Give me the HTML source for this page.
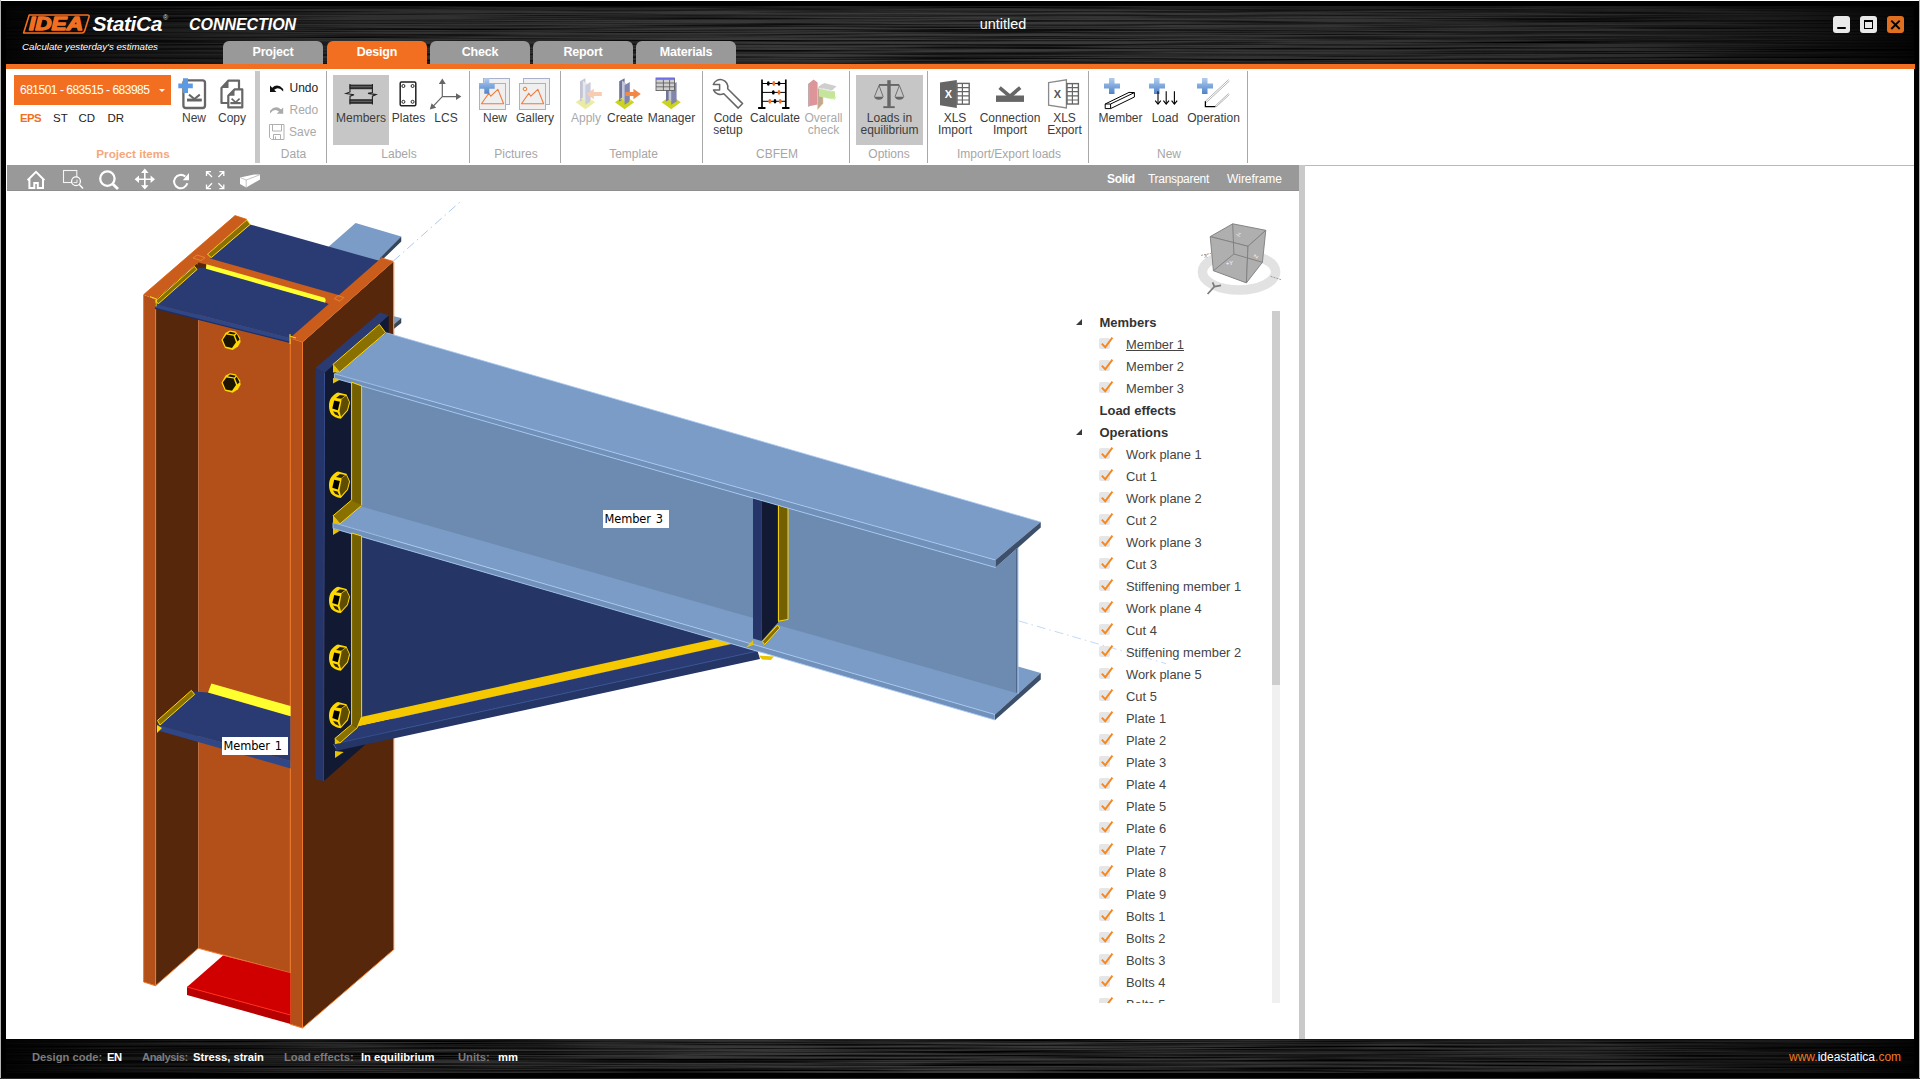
<!DOCTYPE html>
<html lang="en">
<head>
<meta charset="utf-8">
<title>IDEA StatiCa Connection - untitled</title>
<style>
*{box-sizing:border-box;margin:0;padding:0}
html,body{width:1920px;height:1079px;overflow:hidden;background:#000;font-family:"Liberation Sans",sans-serif}
.abs{position:absolute}
#win{position:absolute;left:0;top:0;width:1920px;height:1079px;background:#000;overflow:hidden}
#edgeT{left:0;top:0;width:1920px;height:1px;background:#fff}
#edgeL{left:0;top:0;width:1px;height:1079px;background:#b4b4b4}
#edgeR{left:1919px;top:0;width:1px;height:1079px;background:#b4b4b4}
#edgeB{left:0;top:1078px;width:1920px;height:1px;background:#2a2a2a}
.brushed{background-image:linear-gradient(90deg,#050505 0,#181818 6%,#2e2e2e 16%,#393939 45%,#393939 55%,#2e2e2e 84%,#181818 94%,#050505 100%)}
.brushed svg{position:absolute;left:0;top:0}
#hdr{left:6px;top:6px;width:1908px;height:58px}
#stripe{left:6px;top:64px;width:1909px;height:5px;background:#f26f21}
#content{left:6px;top:69px;width:1908px;height:970px;background:#fff}
#status{left:6px;top:1039px;width:1908px;height:34px}
/* logo */
#logo{left:22px;top:14px;width:68px;height:20px}
.ital{font-style:italic;font-weight:bold;color:#fff;white-space:nowrap}
#statica{left:92.5px;top:12px;font-size:21px;line-height:24px;letter-spacing:-.4px}
#reg{left:163px;top:14px;font-size:7px;line-height:8px;color:#ddd;font-style:normal;font-weight:normal}
#conn{left:189px;top:14px;font-size:16px;line-height:22px;font-weight:bold;letter-spacing:-.05px}
#slogan{left:22px;top:40.5px;font-size:9.75px;line-height:12px;font-weight:normal;letter-spacing:-.03px}
#title{left:930px;top:14px;width:146px;text-align:center;color:#fff;font-size:14.4px;line-height:20px}
.wb{top:16px;width:17px;height:17px;border-radius:3px;background:#e9e9e9}
/* tabs */
.tab{top:41px;width:100px;height:23px;border-radius:6px 6px 0 0;background:#999;color:#fff;font-weight:bold;font-size:12.5px;line-height:23px;text-align:center;letter-spacing:-.2px}
.tab.on{background:#f26f21;height:25px}
/* ribbon */
.sep{top:71px;width:1px;height:92px;background:#a8a8a8}
.lbl{font-size:12px;line-height:12px;color:#3c3c3c;text-align:center;white-space:nowrap;transform:translateX(-50%)}
.lbl.dis{color:#a9a9a9}
.grp{top:147.5px;font-size:12px;line-height:12px;color:#a6a6a6;text-align:center;white-space:nowrap;transform:translateX(-50%)}
.hl{top:75px;height:70px;background:#c6c6c6}
/* toolbar */
#tbar{left:7px;top:165px;width:1292px;height:26px;background:#999}
.vm{top:172px;font-size:12px;line-height:14px;color:#fff;white-space:nowrap}
/* panels */
#split{left:1299px;top:165px;width:6px;height:874px;background:#c9c9c9}
#rpanel{left:1305px;top:165px;width:609px;height:874px;border-top:1px solid #b9b9b9;background:#fff}
#vtop{left:7px;top:190px;width:1292px;height:1px;background:#8f8f8f}
/* status */
.st{top:1050px;font-size:11.2px;line-height:14px;white-space:nowrap;font-weight:bold}
.st.k{color:#7c7c7c}
.st.v{color:#fff}
/* tree */
.th{left:1099px;font-size:13px;line-height:14px;font-weight:bold;color:#333;white-space:nowrap}
.ti{left:1126px;font-size:12.9px;line-height:14px;color:#444;white-space:nowrap}
.cb{left:1099px;width:11px;height:11px;border-radius:2px;background:#e6e6e6}
.mlabel{background:#fff;color:#000;font-family:"DejaVu Sans","Liberation Sans",sans-serif;font-size:11.4px;line-height:18px;white-space:nowrap;padding-left:1.5px;letter-spacing:-.1px;word-spacing:1.5px}
</style>
</head>
<body>
<div id="win">
<div id="edgeT" class="abs"></div><div id="edgeL" class="abs"></div><div id="edgeR" class="abs"></div><div id="edgeB" class="abs"></div>
<div id="hdr" class="abs brushed"><svg width="1908" height="58"><filter id="br1" x="0" y="0" width="100%" height="100%"><feTurbulence type="fractalNoise" baseFrequency="0.0035 0.55" numOctaves="3" seed="7"/><feColorMatrix type="matrix" values="0 0 0 0 0  0 0 0 0 0  0 0 0 0 0  2.2 0 0 0 -0.85"/></filter><rect width="1908" height="58" filter="url(#br1)"/><rect width="1908" height="58" fill="url(#hfade)"/><defs><linearGradient id="hfade" x1="0" y1="0" x2="0" y2="1"><stop offset="0" stop-color="#000" stop-opacity=".4"/><stop offset=".1" stop-color="#000" stop-opacity="0"/><stop offset=".85" stop-color="#000" stop-opacity="0"/><stop offset="1" stop-color="#000" stop-opacity=".2"/></linearGradient></defs></svg></div>
<div id="status" class="abs brushed"><svg width="1908" height="34"><filter id="br2" x="0" y="0" width="100%" height="100%"><feTurbulence type="fractalNoise" baseFrequency="0.0035 0.55" numOctaves="3" seed="11"/><feColorMatrix type="matrix" values="0 0 0 0 0  0 0 0 0 0  0 0 0 0 0  2.2 0 0 0 -0.7"/></filter><rect width="1908" height="34" filter="url(#br2)"/></svg></div>
<div id="content" class="abs"></div>

<!--TABS-->
<div class="abs tab" style="left:223px">Project</div>
<div class="abs tab on" style="left:327px">Design</div>
<div class="abs tab" style="left:430px">Check</div>
<div class="abs tab" style="left:533px">Report</div>
<div class="abs tab" style="left:636px">Materials</div>
<div id="stripe" class="abs"></div>

<!--LOGO-->
<svg class="abs" id="logo" viewBox="0 0 68 20" width="68" height="20">
 <path d="M7.2 1 H65.5 Q67.6 1 67 3 L62.6 17 Q62 19 59.8 19 H1.6 Z" fill="none" stroke="#f26f21" stroke-width="1.6" stroke-linejoin="round"/>
 <text x="7" y="16.4" font-family="Liberation Sans, sans-serif" font-size="17.5" font-weight="bold" font-style="italic" fill="#f26f21" stroke="#f26f21" stroke-width="1.3" stroke-linejoin="round" textLength="54" lengthAdjust="spacingAndGlyphs">IDEA</text>
</svg>
<div id="statica" class="abs ital">StatiCa</div>
<div id="reg" class="abs ital">®</div>
<div id="conn" class="abs ital">CONNECTION</div>
<div id="slogan" class="abs ital">Calculate yesterday's estimates</div>
<!--TITLE-->
<div id="title" class="abs">untitled</div>
<div class="abs wb" style="left:1833px"><div class="abs" style="left:4px;top:11px;width:9px;height:2px;background:#000;border-radius:1px"></div></div>
<div class="abs wb" style="left:1860px"><div class="abs" style="left:4px;top:4px;width:9px;height:9px;border:1.5px solid #000;border-top-width:2px"></div></div>
<div class="abs wb" style="left:1887px;background:#e06f1f"><svg class="abs" style="left:0;top:0" width="17" height="17" viewBox="0 0 17 17"><path d="M4.3 4.6 L12.7 13 M12.7 4.6 L4.3 13" stroke="#000" stroke-width="1.9" fill="none"/></svg></div>
<!--RIBBON-->
<div class="abs" style="left:14px;top:75px;width:157px;height:30px;background:#f26f21"></div>
<div class="abs" style="left:20px;top:83px;font-size:12px;line-height:14px;color:#fff;white-space:nowrap;letter-spacing:-.5px">681501 - 683515 - 683985</div>
<div class="abs" style="left:159px;top:89px;width:0;height:0;border-left:3px solid transparent;border-right:3px solid transparent;border-top:3.5px solid #fff"></div>
<div class="abs" style="left:20px;top:111px;font-size:11.4px;line-height:14px;color:#f26f21;white-space:nowrap;font-weight:bold;letter-spacing:-.6px">EPS</div>
<div class="abs" style="left:53px;top:111px;font-size:11.5px;line-height:14px;color:#222;white-space:nowrap">ST</div>
<div class="abs" style="left:78.5px;top:111px;font-size:11.5px;line-height:14px;color:#222;white-space:nowrap">CD</div>
<div class="abs" style="left:107.5px;top:111px;font-size:11.5px;line-height:14px;color:#222;white-space:nowrap">DR</div>
<div class="abs" style="left:255px;top:71px;width:5px;height:92px;background:#c8c8c8"></div>
<div class="abs sep" style="left:326px"></div><div class="abs sep" style="left:469px"></div><div class="abs sep" style="left:560px"></div>
<div class="abs sep" style="left:702px"></div><div class="abs sep" style="left:849px"></div><div class="abs sep" style="left:927px"></div>
<div class="abs sep" style="left:1088px"></div><div class="abs sep" style="left:1247px"></div>
<div class="abs hl" style="left:333px;width:56px"></div>
<div class="abs hl" style="left:856px;width:67px"></div>

<div class="abs lbl" style="left:194px;top:112px">New</div>
<div class="abs lbl" style="left:232px;top:112px">Copy</div>
<div class="abs lbl" style="left:289.5px;top:82px;color:#222;transform:none">Undo</div>
<div class="abs lbl dis" style="left:289.5px;top:104px;transform:none">Redo</div>
<div class="abs lbl dis" style="left:289px;top:126px;transform:none">Save</div>
<div class="abs lbl" style="left:361px;top:112px">Members</div>
<div class="abs lbl" style="left:408.5px;top:112px">Plates</div>
<div class="abs lbl" style="left:446px;top:112px">LCS</div>
<div class="abs lbl" style="left:495px;top:112px">New</div>
<div class="abs lbl" style="left:535px;top:112px">Gallery</div>
<div class="abs lbl dis" style="left:586px;top:112px">Apply</div>
<div class="abs lbl" style="left:625px;top:112px">Create</div>
<div class="abs lbl" style="left:671.5px;top:112px">Manager</div>
<div class="abs lbl" style="left:728px;top:112px">Code<br>setup</div>
<div class="abs lbl" style="left:775px;top:112px">Calculate</div>
<div class="abs lbl dis" style="left:823.5px;top:112px">Overall<br>check</div>
<div class="abs lbl" style="left:889.5px;top:112px">Loads in<br>equilibrium</div>
<div class="abs lbl" style="left:955px;top:112px">XLS<br>Import</div>
<div class="abs lbl" style="left:1010px;top:112px">Connection<br>Import</div>
<div class="abs lbl" style="left:1064.5px;top:112px">XLS<br>Export</div>
<div class="abs lbl" style="left:1120.5px;top:112px">Member</div>
<div class="abs lbl" style="left:1165px;top:112px">Load</div>
<div class="abs lbl" style="left:1213.5px;top:112px">Operation</div>

<div class="abs grp" style="left:133px;color:#f5a77b;font-weight:bold;font-size:11.7px">Project items</div>
<div class="abs grp" style="left:293.5px">Data</div>
<div class="abs grp" style="left:399px">Labels</div>
<div class="abs grp" style="left:516px">Pictures</div>
<div class="abs grp" style="left:633.5px">Template</div>
<div class="abs grp" style="left:777px">CBFEM</div>
<div class="abs grp" style="left:889px">Options</div>
<div class="abs grp" style="left:1009px">Import/Export loads</div>
<div class="abs grp" style="left:1169px">New</div>
<!--ICONS-->
<svg class="abs" style="left:0;top:0" width="1920" height="170" viewBox="0 0 1920 170">
<defs>
 <linearGradient id="gplus" x1="0" y1="0" x2="0" y2="1"><stop offset="0" stop-color="#b4cdec"/><stop offset=".5" stop-color="#7fa8de"/><stop offset="1" stop-color="#4f82c6"/></linearGradient>
 <g id="plus"><path d="M5 0 h5.5 v5.5 h5.5 v5 h-5.5 v5.5 h-5.5 v-5.5 h-5 v-5 h5 z" fill="url(#gplus)"/></g>
</defs>
<!-- Project: New -->
<g fill="none" stroke="#666" stroke-width="2.3">
 <rect x="183.4" y="80.4" width="21.6" height="27.6" rx="2.5"/>
</g>
<rect x="187" y="98.6" width="14.8" height="2.9" fill="#666"/>
<path d="M189 94.6 L194.4 99 L199.8 94.6" fill="none" stroke="#666" stroke-width="2"/>
<path d="M183 78.2 h5 v5.3 h4.8 v4.8 h-4.8 v4.6 h-5 v-4.6 h-4.7 v-4.8 h4.7 z" fill="#5b9be6"/>
<!-- Project: Copy -->
<g fill="#fff" stroke="#666" stroke-width="2.2" stroke-linejoin="round">
 <path d="M228.5 80.6 H239 V103 H221.5 V88 Z"/>
 <path d="M234.5 89.4 H242.3 V107.4 H228.3 V95.8 Z"/>
</g>
<path d="M228.5 80.6 V88 H221.5 Z" fill="#666"/><path d="M234.5 89.4 V95.8 H228.3 Z" fill="#666"/>
<rect x="230.4" y="102" width="10.4" height="2.2" fill="#666"/>
<path d="M231.6 98.6 L235.6 102.4 L239.6 98.6" fill="none" stroke="#666" stroke-width="1.6"/>
<!-- Undo / Redo / Save -->
<path d="M270 92 V85.6 L272.2 87.8 Q277.5 82.8 283.2 89 L283.2 91.6 Q278.5 85.8 274.2 89.8 L276.4 92 Z" fill="#111"/>
<path d="M283.2 113.8 V107.4 L281 109.6 Q275.7 104.6 270 110.8 L270 113.4 Q274.7 107.6 279 111.6 L276.8 113.8 Z" fill="#aaa"/>
<g fill="none" stroke="#b0b0b0" stroke-width="1">
 <path d="M269.5 124.5 H284 V139.5 H271.5 L269.5 137.5 Z"/><path d="M272.5 124.5 V131 H281.5 V124.5"/><path d="M273.5 139.5 V134.5 H280.5 V139.5 M275.5 139 V136.5"/>
</g>
<!-- Members -->
<g>
 <rect x="349.5" y="84.6" width="23.4" height="4.6" fill="#2b2b2b"/><rect x="350" y="86.2" width="22.4" height="1.1" fill="#666"/>
 <rect x="349.5" y="99.2" width="23.4" height="4.6" fill="#2b2b2b"/><rect x="350" y="100.8" width="22.4" height="1.1" fill="#666"/>
 <path d="M350 84 V92 L346 93.6 L354 94.8 L350 96.2 V104.6 M372.4 84 V92.6 L368 93.4 L376 94.6 L372.4 96.2 V104.6" fill="none" stroke="#222" stroke-width="1.1"/>
</g>
<!-- Plates -->
<rect x="400.2" y="82" width="15.6" height="23.8" rx="1.2" fill="none" stroke="#222" stroke-width="1.5"/>
<g fill="none" stroke="#222" stroke-width="1"><circle cx="403.4" cy="86" r="1.5"/><circle cx="412.6" cy="86" r="1.5"/><circle cx="403.4" cy="101.8" r="1.5"/><circle cx="412.6" cy="101.8" r="1.5"/></g>
<!-- LCS -->
<g stroke="#666" stroke-width="1.2" fill="#666">
 <path d="M442.3 96.6 V83 M442.3 96.6 H456 M442.3 96.6 L433.5 105.8" fill="none"/>
 <path d="M442.3 78.6 L445.8 84 H438.8 Z M461.4 96.6 L456 100 V93.2 Z M429.8 109.6 L431.6 103.2 L436.2 107.8 Z" stroke="none"/>
</g>
<!-- Pictures New / Gallery -->
<g id="pic">
 <rect x="483.5" y="78.5" width="26" height="26" fill="#f0f0f0" stroke="#a9b1cc" stroke-width="1"/>
 <rect x="479.5" y="83.5" width="26" height="26" fill="#efefef" stroke="#a9b1cc" stroke-width="1"/>
 <path d="M481.5 103.7 L488.8 93.2 L490.8 96.2 L497.9 89.4 L503.6 103.7 Z" fill="none" stroke="#f07a3a" stroke-width="1.1" stroke-linejoin="round"/>
</g>
<use href="#pic" x="40" y="0"/>
<circle cx="525" cy="89" r="1.8" fill="none" stroke="#f07a3a" stroke-width="1"/>
<path d="M484.3 78.2 h5 v5.6 h5.4 v4.9 h-5.4 v5 h-5 v-5 h-5.1 v-4.9 h5.1 z" fill="url(#gplus)"/>
<!-- Template: Apply (faded), Create, Manager -->
<g id="col" >
 <path d="M615 102.2 L624.6 95.4 L634.2 102.2 L624.6 109.2 Z" fill="#cbd322"/>
 <path d="M619.2 81.2 L624.6 78.2 V98.6 L619.2 101.6 Z" fill="#6f7499"/>
 <path d="M622 80.6 L627.4 84.4 V103 L622 99.6 Z" fill="#c3c7da"/>
 <path d="M624.6 85.2 L629.8 82 V101.4 L624.6 104.8 Z" fill="#8286ad"/>
 <path d="M619.4 99.6 l2.4-1.8 l2 1.6 z M629.6 99.4 l2.2 1.4 l-2.2 1.6z" fill="#e4ea3a"/>
</g>
<path d="M625.4 92 H633.4 V88.8 L640.8 94 L633.4 99.2 V96 H625.4 Z" fill="#f08848"/>
<g opacity=".42"><use href="#col" x="-39.2" y="0"/><path d="M601.8 92 H593.8 V88.8 L586.4 94 L593.8 99.2 V96 H601.8 Z" fill="#f08848"/></g>
<g>
 <path d="M661.6 102.2 L671.2 95.4 L680.8 102.2 L671.2 109.2 Z" fill="#cbd322"/>
 <path d="M666 84 L671.2 81 V98.6 L666 101.6 Z" fill="#6f7499"/>
 <path d="M668.6 84 L674 86 V103 L668.6 99.6 Z" fill="#c3c7da"/>
 <path d="M671.2 85.2 L676.6 82 V101.4 L671.2 104.8 Z" fill="#8286ad"/>
 <rect x="656" y="78" width="18.6" height="12.6" fill="#cfcfcf" stroke="#555" stroke-width=".8"/>
 <rect x="656" y="78" width="18.6" height="1.8" fill="#6e6ee8"/>
 <path d="M656 83 H674.6 M656 86.8 H674.6 M663.4 79.8 V90.6 M669.6 79.8 V90.6" stroke="#555" stroke-width=".8" fill="none"/>
</g>
<!-- Code setup wrench -->
<path d="M713.3 84.6 A7.5 7.5 0 0 1 727.7 88.7 L742.6 103.6 L738.2 108.1 L723.8 93.7 A7.5 7.5 0 0 1 713.5 89.9 H719.6 V84.6 Z" fill="#fff" stroke="#666" stroke-width="1.5" stroke-linejoin="round"/>
<!-- Calculate abacus -->
<g stroke="#000" fill="none">
 <path d="M762 79.4 V107.6 M785.8 79.4 V107.6" stroke-width="1.7"/>
 <path d="M758.8 108 H764.8 M782.8 108 H788.8" stroke-width="1.8" stroke-linecap="round"/>
 <path d="M762 83.5 H785.8 M762 92.4 H785.8 M762 101.3 H785.8" stroke-width="1"/>
</g>
<g fill="#000"><ellipse cx="768.3" cy="83.5" rx="1.4" ry="2.2"/><ellipse cx="779" cy="83.5" rx="1.4" ry="2.2"/><ellipse cx="773.3" cy="92.4" rx="1.4" ry="2.2"/><ellipse cx="775" cy="101.3" rx="1.4" ry="2.2"/></g>
<g fill="#f26f21"><ellipse cx="773.8" cy="83.5" rx="1.4" ry="2.4"/><ellipse cx="779" cy="92.4" rx="1.4" ry="2.4"/><ellipse cx="769.8" cy="101.3" rx="1.4" ry="2.4"/><ellipse cx="780.2" cy="101.3" rx="1.4" ry="2.4"/></g>
<!-- Overall check (faded) -->
<g opacity=".9">
 <path d="M808 84 L813.6 79.4 L817.6 82.6 V104.6 L808 106.4 Z" fill="#da8a90"/>
 <path d="M808 84 L810 83.4 V106 L808 106.4 Z" fill="#b9a2a6"/>
 <path d="M817.6 88 L823 84 V103.4 L817.6 109.4 Z" fill="#b99f8a" stroke="#f4c078" stroke-width=".6"/>
 <path d="M819 88.6 L835 91.4 V99.6 L819 96.6 Z" fill="#bfe392"/>
 <path d="M819 96.6 L835 99.6 L836.6 96 L831 99.2 Z" fill="#c9f09a"/>
 <path d="M817.8 87.2 L824.4 83 L836.6 86.2 L832 90.6 Z" fill="#c9c9c9"/>
 <path d="M817.8 87.2 L832 90.6 V91.8 L817.8 88.6Z" fill="#e4e4e4"/>
</g>
<!-- Loads in equilibrium -->
<g fill="#666">
 <rect x="887.3" y="80.2" width="3.4" height="26.6"/><rect x="883.3" y="106.2" width="11.4" height="1.9"/><rect x="879" y="84" width="20.2" height="1.9"/>
 <path d="M874.2 96.8 H883.4 Q882.6 99.8 878.8 99.8 Q875 99.8 874.2 96.8 Z M894.8 96.8 H904 Q903.2 99.8 899.4 99.8 Q895.6 99.8 894.8 96.8 Z"/>
</g>
<path d="M874.4 96.8 L879 85.4 L883.2 96.8 M895 96.8 L899.4 85.4 L903.8 96.8" fill="none" stroke="#666" stroke-width=".9"/>
<!-- XLS Import -->
<path d="M940 82.4 L956.8 80 V108 L940 105.3 Z" fill="#666"/>
<text x="948.4" y="98" font-family="Liberation Sans, sans-serif" font-weight="bold" font-size="11" fill="#fff" text-anchor="middle">X</text>
<g fill="none" stroke="#666"><rect x="957" y="83.4" width="12.2" height="20.8" stroke-width="1.4"/><path d="M957 87.6 H969 M957 91.7 H969 M957 95.8 H969 M957 100 H969 M962.4 83.4 V104.2" stroke-width="1.2"/></g>
<!-- Connection Import -->
<g fill="#666"><rect x="996" y="95.5" width="28" height="6.4"/></g>
<path d="M999.6 87.6 L1010 96.4 L1020.2 87.6" fill="none" stroke="#666" stroke-width="3.6"/>
<!-- XLS Export -->
<path d="M1048.6 82.6 L1066.4 79.8 V108 L1048.6 105.2 Z" fill="#fff" stroke="#8a8a8a" stroke-width="1.3"/>
<text x="1057.4" y="98" font-family="Liberation Sans, sans-serif" font-weight="bold" font-size="11" fill="#555" text-anchor="middle">X</text>
<g fill="none" stroke="#666"><rect x="1067" y="83.6" width="11.4" height="20.4" stroke-width="1.4"/><path d="M1067 87.6 H1078 M1067 91.7 H1078 M1067 95.8 H1078 M1067 100 H1078 M1072.4 83.6 V104" stroke-width="1.2"/></g>
<!-- New: Member -->
<use href="#plus" x="1104" y="78"/>
<g fill="#fff" stroke="#000" stroke-width="1" stroke-linejoin="round">
 <path d="M1105.2 104 L1129 92.4 L1134.4 92.6 V97 L1110.6 108.6 H1105.2 Z"/>
 <path d="M1105.2 104 H1110.6 V108.6 M1110.6 104 L1134.4 92.6" fill="none"/>
</g>
<!-- New: Load -->
<use href="#plus" x="1149" y="78"/>
<g stroke="#000" stroke-width="1.1" fill="none"><path d="M1158 91.2 V104 M1166.2 91.2 V104 M1174.4 91.2 V104"/><path d="M1155.2 100.6 L1158 104.2 L1160.8 100.6 M1163.4 100.6 L1166.2 104.2 L1169 100.6 M1171.6 100.6 L1174.4 104.2 L1177.2 100.6"/></g>
<!-- New: Operation -->
<use href="#plus" x="1197" y="78"/>
<g fill="none"><path d="M1205.2 101.4 L1228.6 79.6 M1206.4 102.4 L1229.4 81 M1215 106.2 L1228.6 93.4 M1216 107 L1229.4 94.6" stroke="#aaa" stroke-width=".9"/><path d="M1205.4 101.2 V106.6 H1215.4" stroke="#000" stroke-width="1.3"/></g>
</svg>
<!--TOOLBAR-->
<div id="tbar" class="abs"></div>
<svg class="abs" style="left:0;top:165px" width="300" height="26" viewBox="0 165 300 26">
<g fill="none" stroke="#fff">
 <path d="M27.6 180.2 L36 171.8 L44.4 180.2 M29.4 179 V188 H34.3 V183 H37.8 V188 H43 V179" stroke-width="2" stroke-linejoin="miter"/>
 <rect x="63.5" y="170.5" width="13.3" height="12" stroke-width="1.1" opacity=".9"/>
 <circle cx="76" cy="181.3" r="4.4" stroke-width="1.3" fill="#999"/><path d="M79.3 184.6 L83 188.4" stroke-width="1.5"/>
 <path d="M73.6 182.6 H77 V179.6" stroke-width="1" opacity=".85"/>
 <circle cx="107.4" cy="178.6" r="7.2" stroke-width="2.3"/><path d="M112.8 184 L118 189" stroke-width="2.8"/>
 <path d="M144.8 171.5 V187 M137 179.2 H152.6" stroke-width="1.6"/>
 <path d="M185.3 176.6 A6.7 6.7 0 1 0 187.3 183.3" stroke-width="2"/>
 <path d="M206.5 176 V171.6 H211 M207 172 L212 177 M219.4 171.6 H223.8 V176 M223.4 172 L218.4 177 M206.5 184.4 V188.6 H211 M207 188.2 L212 183.2 M219.4 188.6 H223.8 V184.4 M223.4 188.2 L218.4 183.2" stroke-width="1.3"/>
</g>
<g fill="#fff">
 <path d="M144.8 168.6 L148.6 173 H141 Z M144.8 189.6 L148.6 185.2 H141 Z M134.6 179.2 L139 175.4 V183 Z M155 179.2 L150.6 175.4 V183 Z"/>
 <path d="M189 173 V180.2 H182.8 Z"/>
 <path d="M240 177.4 L254.2 174.4 L260 174.6 V179.6 L246.2 187.4 L240 184 Z"/>
</g>
<path d="M240.4 177.6 L246.2 180 V187 M246.2 180 L259.8 174.8" fill="none" stroke="#aaa" stroke-width=".7"/>
</svg>
<div class="abs vm" style="left:1107px;font-weight:bold;letter-spacing:-.3px">Solid</div>
<div class="abs vm" style="left:1148px;letter-spacing:-.3px">Transparent</div>
<div class="abs vm" style="left:1227px;letter-spacing:-.05px">Wireframe</div>
<div id="split" class="abs"></div>
<div id="rpanel" class="abs"></div>
<!--VIEWPORT-->
<div id="vtop" class="abs"></div>
<svg class="abs" style="left:7px;top:191px" width="1292" height="848" viewBox="7 191 1292 848">
<defs>
 <g id="bolt">
  <path d="M-10 0.9 C-10 -3 -9 -6 -7.6 -7.6 C-5.5 -10.5 -3 -12.3 -0.9 -12.8 L7.5 -10.6 L11.1 -2.8 L9 5.4 L1.8 13.5 C-2 13 -5.5 11.5 -7.6 9.3 C-9 7.4 -10 4.5 -10 0.9 Z" fill="#ffd800"/>
  <path d="M-4.8 -4.6 L0.9 -3.4 L-1.2 5.1 L-6.7 3.3 Z" fill="#000"/>
  <path d="M-3 -7.3 L0.9 -10.3 L6.3 -9.5 L2.2 -6.5 Z M-6 6 L-1.5 7.2 L0.3 11.1 L-3.9 9.3 Z" fill="#2a2200"/>
  <path d="M7.2 -9.4 L10.1 -3 L8.1 4.8 L2 11.6 L0.5 6 L2.7 -6.3 Z" fill="#5e4d00"/>
 </g>
 <g id="hexb">
  <path d="M-9.6 -0.5 L-5.4 -7.6 L-1 -10 L4.6 -9 L9 -3 L9.6 1.6 L7 6 L1.6 9.6 L-6 7.6 Z" fill="#ffd800"/>
  <path d="M-8.2 -0.6 L-4.6 -5.8 L2.6 -4.6 L5 1.8 L1 7.6 L-5.4 6.2 Z" fill="#1a1400"/>
  <path d="M-3.2 -7 L-1 -8.6 L4.8 -7.4 L3.2 -5.8 Z M4 -4.6 L5.8 -6.4 L8.6 -1 L6.4 1 Z" fill="#1a1400"/>
 </g>
</defs>
<!-- back light-blue plate (member 2) -->
<path d="M326 249 L355.6 222.9 L401.25 236.5 L378 262 Z" fill="#7b9cc6"/>
<path d="M401.25 236.5 V241.4 L382.6 259.6 L379.6 258.6 Z" fill="#36465a"/>
<path d="M393.75 316.2 L401.25 318 L393.75 324.6 Z" fill="#7b9cc6"/><path d="M401.25 318 V323 L393.75 329 V324.6 Z" fill="#36465a"/>
<path d="M393.4 261 L460 202" stroke="#a9c9f2" stroke-width="1" stroke-dasharray="9 4 1.5 4" fill="none"/>
<path d="M1019 621 L1166 663.6" stroke="#c3d9f6" stroke-width="1" stroke-dasharray="9 4 1.5 4" fill="none"/>
<!-- column -->
<path d="M155.5 299.4 L198.25 262 V948.25 L155.5 985.75 Z" fill="#57270c"/>
<path d="M198.25 262 L290.5 288 V973 L198.25 948.25 Z" fill="#b3501a"/>
<path d="M143.5 294.75 L155.6 299.4 L155.5 985.75 L143.75 982 Z" fill="#b3501a"/>
<path d="M302.5 342 L393.2 261.6 L393.75 949.5 L302.5 1028 Z" fill="#57270c"/>
<path d="M290 338 L302.5 342 V1028 L290.5 1024.25 Z" fill="#b3501a"/>
<path d="M193 258 L200 252 L346 296 L340 307 L197 264.6 Z" fill="#cb5d1c"/>
<path d="M198 262.6 L206.5 264.6 L206 268 L197 269 Z" fill="#57270c"/>
<g fill="none" stroke="#f07828" stroke-width="1">
 <path d="M143.6 295 V982 L155.5 985.75 L198.25 948.25 L290.5 973 M155.6 299.6 V985.6 M290.3 338 V1024.25 L302.5 1028 L393.75 949.5 V262 M302.5 342 V1028 M143.5 294.75 L235 215.6 L246.9 219.4 M290 338 L302.5 342 L393.2 261.4 L381.25 257.9"/>
</g>
<!-- red base plate -->
<path d="M187 987 L223 955.5 L290.5 973 V1015 Z" fill="#d10000"/>
<path d="M187 987 L290.5 1015 V1024 L187 995 Z" fill="#b90000"/>
<path d="M187 987 L290.5 1015" stroke="#ff2a1a" stroke-width="1" fill="none"/>
<!-- upper stiffeners (blue) -->
<path d="M250 224.4 L382 261.6 L342 296 L210 258.4 Z" fill="#2a3b73"/>
<path d="M246.9 219.8 L250.2 224.4 L211.25 257.6 L207.5 254.2 Z" fill="#8a7000" stroke="#ffd800" stroke-width="1"/>
<path d="M155 303.75 L196.4 268.6 L206 267.4 L332 304.4 L293 339 Z" fill="#2a3b73"/>
<path d="M155 303.75 L290 338 V342.4 L155 308.4 Z" fill="#2f4786"/>
<path d="M155 308.4 L290 342.4" stroke="#1f2f63" stroke-width="1.2" fill="none"/>
<path d="M155.8 300.6 L194.4 266.3 L197 269.5 L158.2 303.9 Z" fill="#8a7000" stroke="#ffd800" stroke-width="1"/>
<path d="M206.4 264.2 L324.6 297.8 Q326.6 300 324.8 302.6 L206 268.8 Z" fill="#ffff30"/>
<path d="M143.5 294.75 L235 215.6 L246.9 219.4 L155.6 299.4 Z" fill="#cb5d1c"/>
<path d="M290 338 L381.25 257.9 L393.2 261.4 L302.5 342 Z" fill="#cb5d1c"/>
<path d="M150 296.6 L156.5 299 L156 306.5" stroke="#ffd800" stroke-width="1" fill="none"/>
<path d="M289.5 336 L296 338 M290 334 V344" stroke="#ffd800" stroke-width="1" fill="none"/>
<path d="M334.4 298.75 L338 295.6 L343.75 297.5 L340 301.25 Z M193 258 L197 255 L205 257.5 L201 260.6 Z" fill="none" stroke="#f0883a" stroke-width=".8"/>
<!-- column web bolts -->
<use href="#hexb" x="231" y="340.4"/><use href="#hexb" x="231" y="383.2"/>
<!-- lower stiffener -->
<path d="M158 722 L194 691.4 L208 692.4 L290.5 716 V761 L158 725 Z" fill="#2a3b73"/>
<path d="M158 725 L290.5 761 V768.4 L158 730.4 Z" fill="#2f4786"/>
<path d="M157.5 720.4 L191.4 690.4 L194.6 694.4 L160 725 Z" fill="#8a7000" stroke="#ffd800" stroke-width="1"/>
<path d="M211.4 683.6 L290.5 706 V716.2 L208 692.6 Z" fill="#ffff30"/>
<path d="M157 725 L162 728 L157 733 Z" fill="#ffd800"/>
<!-- end plate -->
<path d="M315.6 368 L380 312.5 L388.75 315.6 L325 372.5 Z" fill="#2a3b73"/>
<path d="M315.6 368 L325 372.5 L324 781 L315.5 779.5 Z" fill="#263569"/>
<path d="M324.6 372.8 L324 781" stroke="#3a5296" stroke-width="1" fill="none"/>
<path d="M325 372.5 L388.75 315.6 V724 L324 781 Z" fill="#121a33"/>
<!-- haunch -->
<path d="M362 535.4 L722 640 L714 641.5 L361 717.4 Z" fill="#243566"/>
<path d="M361 717 L716 638.8 L734 644 L356 727 Z" fill="#f5c800"/>
<path d="M356 727 L732.5 643.75 L757.5 651 L335 743.75 Z" fill="#2a3b73"/>
<path d="M335 743.75 L757.5 651 L760 659 L335.6 751 Z" fill="#243566"/>
<path d="M335 743.75 L757.5 651" stroke="#34508f" stroke-width="1" fill="none"/>
<path d="M335 751 L343.75 752 L335 758 Z" fill="#e8c400"/>
<path d="M333.5 744 L336 748.5" stroke="#4a68a8" stroke-width="1" fill="none"/>
<!-- beam bottom flange -->
<path d="M333 522.5 L351 503 L362 503.7 L1017 690.4 L1018 666.5 L1040.75 673 L995 714.5 Z" fill="#7b9cc6"/>
<path d="M333 522.6 L995 714.5 V720 L333 528.4 Z" fill="#7191bb" stroke="#a6c8f2" stroke-width=".9"/>
<path d="M995 714.5 L1040.75 673 V679.5 L995 720 Z" fill="#3c4f6b"/>
<!-- beam web -->
<path d="M362 385.9 L995.5 567.5 L1018 547.6 V693.4 L362 506.7 Z" fill="#6d8bb0"/>
<path d="M1018 547.6 V694" stroke="#a6c8f2" stroke-width="1" fill="none"/>
<path d="M1016.6 549 V692.6" stroke="#4d6484" stroke-width="1" fill="none"/>
<!-- beam stiffener -->
<path d="M753 497.8 L761.75 500.4 V641 L753 638.5 Z" fill="#263569"/>
<path d="M761.75 500.4 L778 505 V622.6 L761.75 641 Z" fill="#121a33"/>
<path d="M778.4 505.2 L788 508 V619.4 L778.4 621.2 Z" fill="#756000" stroke="#ffd800" stroke-width="1"/>
<path d="M762.4 641.4 L777.6 625.2 L779.8 628 L764.6 644.6 Z" fill="#8a7000" stroke="#ffd800" stroke-width="1"/>
<path d="M746 647.6 L753 640 L753.4 645 Z M759 655.6 L774 656.6 L771 660 L762 659.6 Z" fill="#e8c400"/>
<!-- beam top flange -->
<path d="M334.4 373.75 L386.25 332.75 L1040.75 522 L995.5 560 Z" fill="#7b9cc6"/>
<path d="M334.4 373.75 L995.5 560 V567.5 L334.4 378.2 Z" fill="#7191bb" stroke="#a6c8f2" stroke-width=".9"/>
<path d="M995.5 560 L1040.75 522 V527.5 L995.5 567.5 Z" fill="#3c4f6b"/>
<path d="M386.25 332.75 L1040.75 522" stroke="#a6c8f2" stroke-width=".8" fill="none"/>
<!-- welds on end plate -->
<path d="M333 364.4 L379.4 324.4 L385.6 332.75 L339.4 372.25 Z" fill="#8a7000" stroke="#ffd800" stroke-width="1"/>
<path d="M333 364.4 L339.4 372.25 L333 372.6 Z" fill="#e8c400"/>
<path d="M333 378 L340.4 379.6 L333 383.4 Z" fill="#e8c400"/>
<path d="M351.6 382.2 L361.6 385.9 V505.4 L351.6 500 Z" fill="#756000"/>
<path d="M351.6 500 L361.6 505.4 L339.9 523.9 L333 515.8 Z" fill="#8a7000"/>
<path d="M351.6 382.2 L361.6 385.9 V505.4 L339.9 523.9 L333 515.8 L351.6 500 Z" fill="none" stroke="#ffd800" stroke-width="1"/>
<path d="M351.6 500 L361.6 505.4" stroke="#7f6800" stroke-width=".8" fill="none"/>
<path d="M333 515.8 L339.9 523.9 L333 523 Z" fill="#e8c400"/>
<path d="M333 528.4 L339.9 530.7 L333 535 Z" fill="#e8c400"/>
<path d="M351.6 533 L361.6 536 V716.6 L357 727.4 L351.6 724.4 Z" fill="#756000"/>
<path d="M351.6 724.4 L357.3 727.7 L339.9 743 L334.8 738.6 Z" fill="#8a7000"/>
<path d="M334.8 738.6 L339.9 743 L334.8 744.3 Z" fill="#e8c400"/>
<path d="M351.6 533 L361.6 536 V716.6 L357.3 727.7 L339.9 743 L334.8 738.6 L351.6 724.4 Z" fill="none" stroke="#ffd800" stroke-width="1"/>
<!-- end plate bolts -->
<use href="#bolt" x="339" y="405.2"/><use href="#bolt" x="339" y="484.4"/><use href="#bolt" x="339" y="599.6"/><use href="#bolt" x="339" y="657.2"/><use href="#bolt" x="339" y="714.8"/>
</svg>
<div class="abs mlabel" style="left:603px;top:510px;width:66px;height:18px">Member 3</div>
<div class="abs mlabel" style="left:222px;top:737px;width:66px;height:18px">Member 1</div>
<!--TREE-->
<svg class="abs" style="left:1190px;top:215px" width="100" height="85" viewBox="1190 215 100 85">
<ellipse cx="1239" cy="272" rx="36.6" ry="18" fill="none" stroke="#e2e2e2" stroke-width="9.6"/>
<g fill="#afafaf" stroke="#7e7e7e" stroke-width=".9" stroke-linejoin="round">
 <path d="M1210.2 236.6 L1232.7 223.8 L1265.8 230.3 L1248 246.3 Z"/>
 <path d="M1210.2 236.6 L1248 246.3 L1246.4 282.9 L1213.4 270.7 Z"/>
 <path d="M1248 246.3 L1265.8 230.3 L1262.4 262.3 L1246.4 282.9 Z"/>
</g>
<path d="M1232.7 223.8 L1233.9 254 L1213.4 270.7 M1233.9 254 L1262.4 262.3" fill="none" stroke="#7e7e7e" stroke-width=".9"/>
<path d="M1201 255.4 L1211 253.4 M1270.6 276.4 L1281 279.6" stroke="#8a8a8a" stroke-width=".8" stroke-dasharray="2 1" fill="none"/>
<path d="M1207.6 294 L1214.4 286.6 L1212.6 282.4 M1214.4 286.6 L1221 285.4" stroke="#7a7a7a" stroke-width="1.7" fill="none"/>
<text x="1226" y="265" font-family="Liberation Sans, sans-serif" font-size="5.5" fill="#fff">+Y</text>
<text x="1254" y="258" font-family="Liberation Sans, sans-serif" font-size="5.5" fill="#fff" transform="rotate(-60 1256 256)">Z</text>
<text x="1236" y="236" font-family="Liberation Sans, sans-serif" font-size="5" fill="#fff" transform="rotate(12 1238 234)">-Z</text>
<text x="1204" y="258" font-family="Liberation Sans, sans-serif" font-size="5.5" fill="#8a8a8a">X</text>
</svg>
<div class="abs" style="left:1070px;top:308px;width:212px;height:695px;overflow:hidden">
<div class="abs" style="left:202px;top:3px;width:8px;height:692px;background:#f0f0f0"></div><div class="abs" style="left:202px;top:3px;width:8px;height:374px;background:#cdcdcd"></div>
<div class="abs" style="left:6px;top:11px;width:0;height:0;border-left:6px solid transparent;border-bottom:6px solid #3a3a3a"></div>
<div class="abs th" style="left:29.5px;top:8.0px">Members</div>
<div class="abs cb" style="left:29px;top:29.5px"></div>
<svg class="abs" style="left:29px;top:27.5px" width="16" height="14" viewBox="0 0 16 14"><path d="M2.8 7.6 L6.2 11.2 L13.4 1.6" fill="none" stroke="#f7861c" stroke-width="1.9"/></svg>
<div class="abs ti" style="left:56px;top:30.0px;text-decoration:underline">Member 1</div>
<div class="abs cb" style="left:29px;top:51.5px"></div>
<svg class="abs" style="left:29px;top:49.5px" width="16" height="14" viewBox="0 0 16 14"><path d="M2.8 7.6 L6.2 11.2 L13.4 1.6" fill="none" stroke="#f7861c" stroke-width="1.9"/></svg>
<div class="abs ti" style="left:56px;top:52.0px">Member 2</div>
<div class="abs cb" style="left:29px;top:73.5px"></div>
<svg class="abs" style="left:29px;top:71.5px" width="16" height="14" viewBox="0 0 16 14"><path d="M2.8 7.6 L6.2 11.2 L13.4 1.6" fill="none" stroke="#f7861c" stroke-width="1.9"/></svg>
<div class="abs ti" style="left:56px;top:74.0px">Member 3</div>
<div class="abs th" style="left:29.5px;top:96.0px">Load effects</div>
<div class="abs" style="left:6px;top:121px;width:0;height:0;border-left:6px solid transparent;border-bottom:6px solid #3a3a3a"></div>
<div class="abs th" style="left:29.5px;top:118.0px">Operations</div>
<div class="abs cb" style="left:29px;top:139.5px"></div>
<svg class="abs" style="left:29px;top:137.5px" width="16" height="14" viewBox="0 0 16 14"><path d="M2.8 7.6 L6.2 11.2 L13.4 1.6" fill="none" stroke="#f7861c" stroke-width="1.9"/></svg>
<div class="abs ti" style="left:56px;top:140.0px">Work plane 1</div>
<div class="abs cb" style="left:29px;top:161.5px"></div>
<svg class="abs" style="left:29px;top:159.5px" width="16" height="14" viewBox="0 0 16 14"><path d="M2.8 7.6 L6.2 11.2 L13.4 1.6" fill="none" stroke="#f7861c" stroke-width="1.9"/></svg>
<div class="abs ti" style="left:56px;top:162.0px">Cut 1</div>
<div class="abs cb" style="left:29px;top:183.5px"></div>
<svg class="abs" style="left:29px;top:181.5px" width="16" height="14" viewBox="0 0 16 14"><path d="M2.8 7.6 L6.2 11.2 L13.4 1.6" fill="none" stroke="#f7861c" stroke-width="1.9"/></svg>
<div class="abs ti" style="left:56px;top:184.0px">Work plane 2</div>
<div class="abs cb" style="left:29px;top:205.5px"></div>
<svg class="abs" style="left:29px;top:203.5px" width="16" height="14" viewBox="0 0 16 14"><path d="M2.8 7.6 L6.2 11.2 L13.4 1.6" fill="none" stroke="#f7861c" stroke-width="1.9"/></svg>
<div class="abs ti" style="left:56px;top:206.0px">Cut 2</div>
<div class="abs cb" style="left:29px;top:227.5px"></div>
<svg class="abs" style="left:29px;top:225.5px" width="16" height="14" viewBox="0 0 16 14"><path d="M2.8 7.6 L6.2 11.2 L13.4 1.6" fill="none" stroke="#f7861c" stroke-width="1.9"/></svg>
<div class="abs ti" style="left:56px;top:228.0px">Work plane 3</div>
<div class="abs cb" style="left:29px;top:249.5px"></div>
<svg class="abs" style="left:29px;top:247.5px" width="16" height="14" viewBox="0 0 16 14"><path d="M2.8 7.6 L6.2 11.2 L13.4 1.6" fill="none" stroke="#f7861c" stroke-width="1.9"/></svg>
<div class="abs ti" style="left:56px;top:250.0px">Cut 3</div>
<div class="abs cb" style="left:29px;top:271.5px"></div>
<svg class="abs" style="left:29px;top:269.5px" width="16" height="14" viewBox="0 0 16 14"><path d="M2.8 7.6 L6.2 11.2 L13.4 1.6" fill="none" stroke="#f7861c" stroke-width="1.9"/></svg>
<div class="abs ti" style="left:56px;top:272.0px">Stiffening member 1</div>
<div class="abs cb" style="left:29px;top:293.5px"></div>
<svg class="abs" style="left:29px;top:291.5px" width="16" height="14" viewBox="0 0 16 14"><path d="M2.8 7.6 L6.2 11.2 L13.4 1.6" fill="none" stroke="#f7861c" stroke-width="1.9"/></svg>
<div class="abs ti" style="left:56px;top:294.0px">Work plane 4</div>
<div class="abs cb" style="left:29px;top:315.5px"></div>
<svg class="abs" style="left:29px;top:313.5px" width="16" height="14" viewBox="0 0 16 14"><path d="M2.8 7.6 L6.2 11.2 L13.4 1.6" fill="none" stroke="#f7861c" stroke-width="1.9"/></svg>
<div class="abs ti" style="left:56px;top:316.0px">Cut 4</div>
<div class="abs cb" style="left:29px;top:337.5px"></div>
<svg class="abs" style="left:29px;top:335.5px" width="16" height="14" viewBox="0 0 16 14"><path d="M2.8 7.6 L6.2 11.2 L13.4 1.6" fill="none" stroke="#f7861c" stroke-width="1.9"/></svg>
<div class="abs ti" style="left:56px;top:338.0px">Stiffening member 2</div>
<div class="abs cb" style="left:29px;top:359.5px"></div>
<svg class="abs" style="left:29px;top:357.5px" width="16" height="14" viewBox="0 0 16 14"><path d="M2.8 7.6 L6.2 11.2 L13.4 1.6" fill="none" stroke="#f7861c" stroke-width="1.9"/></svg>
<div class="abs ti" style="left:56px;top:360.0px">Work plane 5</div>
<div class="abs cb" style="left:29px;top:381.5px"></div>
<svg class="abs" style="left:29px;top:379.5px" width="16" height="14" viewBox="0 0 16 14"><path d="M2.8 7.6 L6.2 11.2 L13.4 1.6" fill="none" stroke="#f7861c" stroke-width="1.9"/></svg>
<div class="abs ti" style="left:56px;top:382.0px">Cut 5</div>
<div class="abs cb" style="left:29px;top:403.5px"></div>
<svg class="abs" style="left:29px;top:401.5px" width="16" height="14" viewBox="0 0 16 14"><path d="M2.8 7.6 L6.2 11.2 L13.4 1.6" fill="none" stroke="#f7861c" stroke-width="1.9"/></svg>
<div class="abs ti" style="left:56px;top:404.0px">Plate 1</div>
<div class="abs cb" style="left:29px;top:425.5px"></div>
<svg class="abs" style="left:29px;top:423.5px" width="16" height="14" viewBox="0 0 16 14"><path d="M2.8 7.6 L6.2 11.2 L13.4 1.6" fill="none" stroke="#f7861c" stroke-width="1.9"/></svg>
<div class="abs ti" style="left:56px;top:426.0px">Plate 2</div>
<div class="abs cb" style="left:29px;top:447.5px"></div>
<svg class="abs" style="left:29px;top:445.5px" width="16" height="14" viewBox="0 0 16 14"><path d="M2.8 7.6 L6.2 11.2 L13.4 1.6" fill="none" stroke="#f7861c" stroke-width="1.9"/></svg>
<div class="abs ti" style="left:56px;top:448.0px">Plate 3</div>
<div class="abs cb" style="left:29px;top:469.5px"></div>
<svg class="abs" style="left:29px;top:467.5px" width="16" height="14" viewBox="0 0 16 14"><path d="M2.8 7.6 L6.2 11.2 L13.4 1.6" fill="none" stroke="#f7861c" stroke-width="1.9"/></svg>
<div class="abs ti" style="left:56px;top:470.0px">Plate 4</div>
<div class="abs cb" style="left:29px;top:491.5px"></div>
<svg class="abs" style="left:29px;top:489.5px" width="16" height="14" viewBox="0 0 16 14"><path d="M2.8 7.6 L6.2 11.2 L13.4 1.6" fill="none" stroke="#f7861c" stroke-width="1.9"/></svg>
<div class="abs ti" style="left:56px;top:492.0px">Plate 5</div>
<div class="abs cb" style="left:29px;top:513.5px"></div>
<svg class="abs" style="left:29px;top:511.5px" width="16" height="14" viewBox="0 0 16 14"><path d="M2.8 7.6 L6.2 11.2 L13.4 1.6" fill="none" stroke="#f7861c" stroke-width="1.9"/></svg>
<div class="abs ti" style="left:56px;top:514.0px">Plate 6</div>
<div class="abs cb" style="left:29px;top:535.5px"></div>
<svg class="abs" style="left:29px;top:533.5px" width="16" height="14" viewBox="0 0 16 14"><path d="M2.8 7.6 L6.2 11.2 L13.4 1.6" fill="none" stroke="#f7861c" stroke-width="1.9"/></svg>
<div class="abs ti" style="left:56px;top:536.0px">Plate 7</div>
<div class="abs cb" style="left:29px;top:557.5px"></div>
<svg class="abs" style="left:29px;top:555.5px" width="16" height="14" viewBox="0 0 16 14"><path d="M2.8 7.6 L6.2 11.2 L13.4 1.6" fill="none" stroke="#f7861c" stroke-width="1.9"/></svg>
<div class="abs ti" style="left:56px;top:558.0px">Plate 8</div>
<div class="abs cb" style="left:29px;top:579.5px"></div>
<svg class="abs" style="left:29px;top:577.5px" width="16" height="14" viewBox="0 0 16 14"><path d="M2.8 7.6 L6.2 11.2 L13.4 1.6" fill="none" stroke="#f7861c" stroke-width="1.9"/></svg>
<div class="abs ti" style="left:56px;top:580.0px">Plate 9</div>
<div class="abs cb" style="left:29px;top:601.5px"></div>
<svg class="abs" style="left:29px;top:599.5px" width="16" height="14" viewBox="0 0 16 14"><path d="M2.8 7.6 L6.2 11.2 L13.4 1.6" fill="none" stroke="#f7861c" stroke-width="1.9"/></svg>
<div class="abs ti" style="left:56px;top:602.0px">Bolts 1</div>
<div class="abs cb" style="left:29px;top:623.5px"></div>
<svg class="abs" style="left:29px;top:621.5px" width="16" height="14" viewBox="0 0 16 14"><path d="M2.8 7.6 L6.2 11.2 L13.4 1.6" fill="none" stroke="#f7861c" stroke-width="1.9"/></svg>
<div class="abs ti" style="left:56px;top:624.0px">Bolts 2</div>
<div class="abs cb" style="left:29px;top:645.5px"></div>
<svg class="abs" style="left:29px;top:643.5px" width="16" height="14" viewBox="0 0 16 14"><path d="M2.8 7.6 L6.2 11.2 L13.4 1.6" fill="none" stroke="#f7861c" stroke-width="1.9"/></svg>
<div class="abs ti" style="left:56px;top:646.0px">Bolts 3</div>
<div class="abs cb" style="left:29px;top:667.5px"></div>
<svg class="abs" style="left:29px;top:665.5px" width="16" height="14" viewBox="0 0 16 14"><path d="M2.8 7.6 L6.2 11.2 L13.4 1.6" fill="none" stroke="#f7861c" stroke-width="1.9"/></svg>
<div class="abs ti" style="left:56px;top:668.0px">Bolts 4</div>
<div class="abs cb" style="left:29px;top:689.5px"></div>
<svg class="abs" style="left:29px;top:687.5px" width="16" height="14" viewBox="0 0 16 14"><path d="M2.8 7.6 L6.2 11.2 L13.4 1.6" fill="none" stroke="#f7861c" stroke-width="1.9"/></svg>
<div class="abs ti" style="left:56px;top:690.0px">Bolts 5</div>
</div>
<!--STATUS-->
<div class="abs st k" style="left:32px">Design code:</div><div class="abs st v" style="left:107px;letter-spacing:-.5px">EN</div>
<div class="abs st k" style="left:142px;letter-spacing:-.45px">Analysis:</div><div class="abs st v" style="left:193px">Stress, strain</div>
<div class="abs st k" style="left:284px">Load effects:</div><div class="abs st v" style="left:361px">In equilibrium</div>
<div class="abs st k" style="left:458px">Units:</div><div class="abs st v" style="left:498px">mm</div>
<div class="abs" style="left:1789px;top:1050px;font-size:12px;line-height:14px;white-space:nowrap;color:#fff"><span style="color:#f07a22">www.</span>ideastatica<span style="color:#f07a22">.com</span></div>
</div>
</body>
</html>
